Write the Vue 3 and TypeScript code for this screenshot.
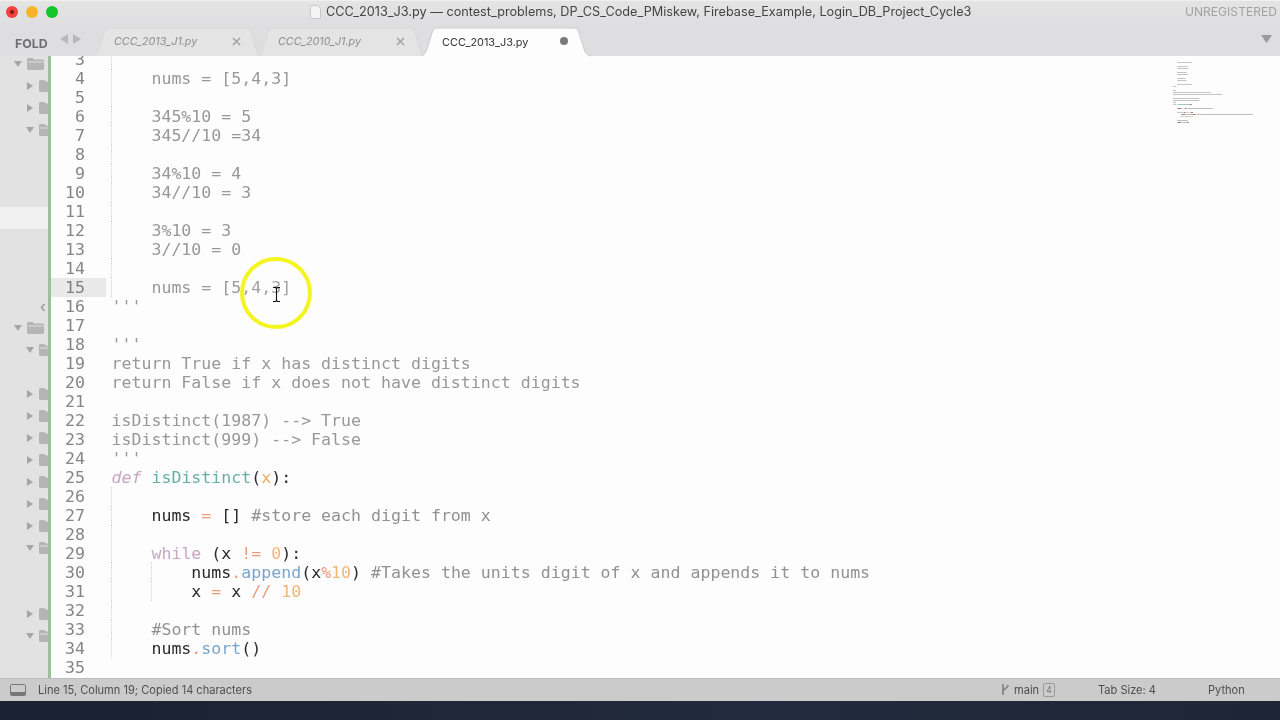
<script setup lang="ts">
type Seg = { t: string; c?: string }
type Line = { n: number; s?: Seg[]; guide?: number }
const k = 'kw', o = 'op', f = 'fn', m = 'mt', p = 'pr', v = 'nm', g = 'cm', d = 'dm'
const dim = (t: string): Seg[] => [{ t, c: d }]
const lines: Line[] = [
  { n: 3, guide: 1 },
  { n: 4, s: dim('    nums = [5,4,3]'), guide: 1 },
  { n: 5, guide: 1 },
  { n: 6, s: dim('    345%10 = 5'), guide: 1 },
  { n: 7, s: dim('    345//10 =34'), guide: 1 },
  { n: 8, guide: 1 },
  { n: 9, s: dim('    34%10 = 4'), guide: 1 },
  { n: 10, s: dim('    34//10 = 3'), guide: 1 },
  { n: 11, guide: 1 },
  { n: 12, s: dim('    3%10 = 3'), guide: 1 },
  { n: 13, s: dim('    3//10 = 0'), guide: 1 },
  { n: 14, guide: 1 },
  { n: 15, s: dim('    nums = [5,4,3]'), guide: 1 },
  { n: 16, s: dim("'''") },
  { n: 17 },
  { n: 18, s: dim("'''") },
  { n: 19, s: dim('return True if x has distinct digits') },
  { n: 20, s: dim('return False if x does not have distinct digits') },
  { n: 21 },
  { n: 22, s: dim('isDistinct(1987) --> True') },
  { n: 23, s: dim('isDistinct(999) --> False') },
  { n: 24, s: dim("'''") },
  { n: 25, s: [{ t: 'def', c: k }, { t: ' ' }, { t: 'isDistinct', c: f }, { t: '(' }, { t: 'x', c: p }, { t: '):' }] },
  { n: 26, guide: 1 },
  { n: 27, s: [{ t: '    nums ' }, { t: '=', c: o }, { t: ' [] ' }, { t: '#store each digit from x', c: g }], guide: 1 },
  { n: 28, guide: 1 },
  { n: 29, s: [{ t: '    ' }, { t: 'while', c: k }, { t: ' (x ' }, { t: '!=', c: o }, { t: ' ' }, { t: '0', c: v }, { t: '):' }], guide: 1 },
  { n: 30, s: [{ t: '        nums' }, { t: '.', c: o }, { t: 'append', c: m }, { t: '(x' }, { t: '%', c: o }, { t: '10', c: v }, { t: ') ' }, { t: '#Takes the units digit of x and appends it to nums', c: g }], guide: 2 },
  { n: 31, s: [{ t: '        x ' }, { t: '=', c: o }, { t: ' x ' }, { t: '//', c: o }, { t: ' ' }, { t: '10', c: v }], guide: 2 },
  { n: 32, guide: 1 },
  { n: 33, s: [{ t: '    #Sort nums', c: g }], guide: 1 },
  { n: 34, s: [{ t: '    nums' }, { t: '.', c: o }, { t: 'sort', c: m }, { t: '()' }], guide: 1 },
  { n: 35 }
]

type Row = { kind: 'none' | 'open' | 'closed'; indent: number; sel?: boolean; back?: boolean }
const none: Row = { kind: 'none', indent: 0 }
const closed: Row = { kind: 'closed', indent: 1 }
const openSub: Row = { kind: 'open', indent: 1 }
const openTop: Row = { kind: 'open', indent: 0 }
const rowKinds: Row[] = [
  openTop, closed, closed, openSub,
  none, none, none,
  { kind: 'none', indent: 0, sel: true },
  none, none, none,
  { kind: 'none', indent: 0, back: true },
  openTop, openSub, none,
  closed, closed, closed, closed, closed, closed, closed,
  openSub, none, none,
  closed, openSub, none, none
]

const tabs = [
  { name: 'CCC_2013_J1.py', active: false },
  { name: 'CCC_2010_J1.py', active: false },
  { name: 'CCC_2013_J3.py', active: true }
]

// Minimap strokes are derived from the source lines: about 1px per character, 2px per line.
const miniColor: Record<string, string> = {
  dm: '#c4c4c4', kw: '#d4bcd2', op: '#efb9a2', fn: '#9fcdc4', mt: '#a7c4de', pr: '#f2c795', nm: '#f2c795', cm: '#bcbcbc', base: '#8c8c8c'
}
const mini = lines.flatMap((l) => {
  let x = 0
  const out: { x: number; y: number; w: number; c: string }[] = []
  for (const s of l.s || []) {
    const lead = s.t.length - s.t.trimStart().length
    const w = s.t.trim().length
    if (w) out.push({ x: (x + lead) * 1.05, y: 2 * l.n - 2, w: w * 1.05, c: miniColor[s.c || 'base'] })
    x += s.t.length
  }
  return out
})
</script>

<template>
  <div class="window">
    <header class="titlebar">
      <div class="lights">
        <span class="light red"><i></i></span>
        <span class="light yellow"></span>
        <span class="light green"></span>
      </div>
      <div class="title">
        <svg class="doc" width="11" height="14" viewBox="0 0 11 14">
          <path d="M.5.5h7l3 3v10H.5z" fill="#f4f4f4" stroke="#c9c9c9" />
        </svg>
        <span>CCC_2013_J3.py — contest_problems, DP_CS_Code_PMiskew, Firebase_Example, Login_DB_Project_Cycle3</span>
      </div>
      <div class="unreg">UNREGISTERED</div>
    </header>

    <div class="tabbar">
      <div class="foldlabel">FOLD</div>
      <div class="navarrows">
        <svg width="8" height="10" viewBox="0 0 8 10"><path d="M8 0v10L0 5z" fill="#b8b8b8" /></svg>
        <svg width="8" height="10" viewBox="0 0 8 10"><path d="M0 0v10l8-5z" fill="#b8b8b8" /></svg>
      </div>
      <div class="tabs">
        <div v-for="t in tabs" :key="t.name" class="tab" :class="{ active: t.active }">
          <svg class="tabshape" width="170" height="28" viewBox="0 0 170 28">
            <path d="M0 28C3 27 5 25 6 21L11 5C12 2 13 0 17 0H152C156 0 157 2 158 5L163 21C164 25 166 27 170 28"
              :fill="t.active ? '#fdfdfd' : '#e4e4e5'" :stroke="t.active ? '#cdcdcd' : '#dadadb'" />
          </svg>
          <span class="tabname">{{ t.name }}</span>
          <span v-if="t.active" class="dot"></span>
          <svg v-else class="close" width="9" height="9" viewBox="0 0 9 9">
            <path d="M1 1l7 7M8 1L1 8" stroke="#a6a6a6" stroke-width="1.7" />
          </svg>
        </div>
      </div>
      <svg class="tabmenu" width="11" height="8" viewBox="0 0 11 8"><path d="M0 0h11L5.500 8z" fill="#9a9a9a" /></svg>
    </div>

    <div class="body">
      <aside class="sidebar">
        <div v-for="(r, i) in rowKinds" :key="i" class="row" :class="{ sel: r.sel, indented: r.indent === 1 }">
          <span v-if="r.back" class="back">‹</span>
          <template v-if="r.kind !== 'none'">
            <svg class="arrow" width="8" height="8" viewBox="0 0 8 8">
              <path v-if="r.kind === 'closed'" d="M1 0v8l6-4z" fill="#a6a6a6" />
              <path v-else d="M0 1h8L4 7z" fill="#a6a6a6" />
            </svg>
            <svg class="folder" width="17" height="12" viewBox="0 0 17 12">
              <path d="M0 1.500Q0 0 1.500 0h4l1.500 1.500h8.500Q17 1.500 17 3v7.500Q17 12 15.500 12h-14Q0 12 0 10.500z" fill="#b5b5b5" />
              <path v-if="r.kind === 'open'" d="M1 4h15" stroke="#dedede" />
            </svg>
          </template>
        </div>
      </aside>
      <main class="editor">
        <div class="code">
          <div v-for="l in lines" :key="l.n" class="line">
            <span class="num" :class="{ cur: l.n === 15 }">{{ l.n }}</span>
            <span class="src">
              <i v-if="l.guide" class="guide g1"></i>
              <i v-if="l.guide === 2" class="guide g2"></i>
              <template v-for="(s, i) in l.s || []" :key="i"><span :class="s.c">{{ s.t }}</span></template>
            </span>
          </div>
        </div>
        <svg class="minimap" width="90" height="75" viewBox="0 0 90 75">
          <rect v-for="(b, i) in mini" :key="i" :x="b.x" :y="b.y" :width="b.w" height="1" :fill="b.c" />
        </svg>
        <div class="spot">
          <svg class="ibeam" width="9" height="15" viewBox="0 0 9 15">
            <path d="M1 .5h2.500L4.500 1.500 5.500.5H8M4.500 1.500v12M1 14.500h2.500l1-1 1 1H8" fill="none" stroke="#111" stroke-width="1.100" />
          </svg>
        </div>
      </main>
    </div>

    <footer class="status">
      <svg class="panel" width="16" height="12" viewBox="0 0 16 12">
        <rect x=".5" y=".5" width="15" height="11" rx="1" fill="none" stroke="#777" />
        <rect x="1" y="8" width="14" height="3" fill="#777" />
      </svg>
      <span class="msg">Line 15, Column 19; Copied 14 characters</span>
      <div class="right">
        <svg width="9" height="13" viewBox="0 0 9 13" class="branch">
          <path d="M2 1v11M7 2C7 6 2 5 2 9" fill="none" stroke="#848484" stroke-width="1.700" />
        </svg>
        <span class="main">main</span>
        <span class="badge">4</span>
        <span class="tabsize">Tab Size: 4</span>
        <span class="lang">Python</span>
      </div>
    </footer>
    <div class="desktop"></div>
  </div>
</template>

<style>
html, body { margin: 0; background: #1b2333; }
</style>

<style scoped>
.window {
  width: 1280px;
  height: 720px;
  overflow: hidden;
  display: flex;
  flex-direction: column;
  font-family: Inter, "Liberation Sans", sans-serif;
  background: #dedee0;
  filter: blur(.35px);
}
.titlebar {
  height: 28px;
  flex: none;
  display: flex;
  align-items: center;
  position: relative;
  background: linear-gradient(#e4e4e4, #dedee0);
  border-top: 1px solid #f0f0f0;
  box-sizing: border-box;
}
.lights { display: flex; gap: 8px; padding-left: 6px; margin-top: -6px; }
.light { width: 12px; height: 12px; border-radius: 50%; display: flex; align-items: center; justify-content: center; }
.light i { width: 4px; height: 4px; border-radius: 50%; background: #7e1414; }
.red { background: #f2423f; }
.yellow { background: #f6b42a; }
.green { background: #12c52b; }
.title {
  position: absolute;
  left: 310px;
  top: 3px;
  display: flex;
  align-items: center;
  gap: 5px;
  font-size: 12.68px;
  line-height: 16px;
  color: #444;
  white-space: nowrap;
}
.doc { flex: none; }
.unreg {
  position: absolute;
  right: 3px;
  top: 3px;
  font-size: 12.1px;
  line-height: 16px;
  color: #a2a2a2;
}
.tabbar {
  height: 28px;
  flex: none;
  display: flex;
  align-items: flex-end;
  position: relative;
  background: #dedee0;
}
.foldlabel {
  position: absolute;
  left: 15px;
  top: 8px;
  font-size: 12.4px;
  line-height: 16px;
  font-weight: 700;
  color: #6f6f6f;
}
.navarrows {
  position: absolute;
  left: 60px;
  top: 6px;
  display: flex;
  gap: 5px;
}
.tabs { display: flex; margin-left: 93px; }
.tab {
  width: 170px;
  height: 28px;
  margin-right: -6px;
  position: relative;
  display: flex;
  align-items: center;
  font-size: 10.75px;
  color: #8f8f8f;
  font-style: italic;
}
.tab.active { color: #333; font-style: normal; z-index: 1; font-size: 10.9px; }
.tabshape { position: absolute; left: 0; top: 0; overflow: visible; }
.tabname { position: relative; margin-left: 21px; margin-top: -1px; }
.close { position: absolute; left: 139px; top: 9px; }
.dot { position: absolute; left: 139px; top: 9px; width: 8px; height: 8px; border-radius: 50%; background: #7a7a7a; }
.tabmenu { position: absolute; right: 8px; top: 7px; }
.body { flex: 1; min-height: 0; display: flex; }
.sidebar {
  width: 48px;
  flex: none;
  background: #e2e2e2;
  overflow: hidden;
  margin-top: -3px;
}
.row { height: 22px; position: relative; display: flex; align-items: center; padding-left: 14px; overflow: visible; }
.row.indented { padding-left: 26px; }
.row.sel { background: #f0f0f0; }
.arrow { flex: none; }
.folder { flex: none; margin-left: 5px; }
.back { position: absolute; left: 40px; top: 3px; font-size: 15px; line-height: 18px; color: #8d8d8d; }
.editor {
  flex: 1;
  min-width: 0;
  position: relative;
  background: #fdfdfd;
  border-left: 3px solid #9cc09c;
  overflow: hidden;
}
.code { margin-top: -6px; }
.line {
  height: 19px;
  display: flex;
  font-family: "DejaVu Sans Mono", "Liberation Mono", monospace;
  font-size: 16.58px;
  line-height: 19px;
  color: #2a2a2a;
  white-space: pre;
}
.num { width: 34px; padding-right: 21px; flex: none; text-align: right; color: #858585; }
.num.cur { background: #e9e9ea; color: #808080; }
.src { position: relative; margin-left: 5.500px; flex: 1; height: 19px; }
.guide { position: absolute; top: 0; bottom: 0; border-left: 1px dotted #d0d0d0; }
.g1 { left: -1px; }
.g2 { left: 39px; }
.dm { color: #989898; }
.kw { color: #c6a6c2; }
.kw:first-child { font-style: italic; }
.op { color: #ec9a7c; }
.fn { color: #68aea2; }
.mt { color: #7aa5cb; }
.pr { color: #efab66; }
.nm { color: #f2b678; }
.cm { color: #919191; }
.minimap { position: absolute; left: 1122px; top: 0; }
.spot {
  position: absolute;
  left: 189px;
  top: 201px;
  width: 72px;
  height: 72px;
  box-sizing: border-box;
  border: 4px solid #f4f420;
  border-radius: 50%;
  background: rgba(255, 255, 255, .1);
}
.ibeam { position: absolute; left: 27.500px; top: 25.500px; }
.status {
  height: 23px;
  flex: none;
  display: flex;
  align-items: center;
  background: #cbcbcb;
  border-top: 1px solid #bdbdbd;
  box-sizing: border-box;
  font-size: 11.05px;
  color: #4e4e4e;
  position: relative;
}
.panel { margin-left: 10px; flex: none; }
.msg { margin-left: 12px; }
.right { position: absolute; left: 0; top: 0; right: 0; bottom: 0; }
.branch { position: absolute; left: 1001px; top: 4px; }
.main { position: absolute; left: 1014px; top: 3px; line-height: 16px; }
.badge {
  position: absolute;
  left: 1043px;
  top: 4px;
  width: 10px;
  height: 12px;
  line-height: 12px;
  border: 1px solid #9a9a9a;
  border-radius: 2px;
  text-align: center;
  font-size: 8.500px;
  color: #777;
}
.tabsize { position: absolute; left: 1098px; top: 3px; line-height: 16px; }
.lang { position: absolute; left: 1208px; top: 3px; line-height: 16px; }
.desktop { height: 19px; flex: none; background: linear-gradient(90deg, #1a2130, #222b3d 60%, #1e2636); }
</style>
